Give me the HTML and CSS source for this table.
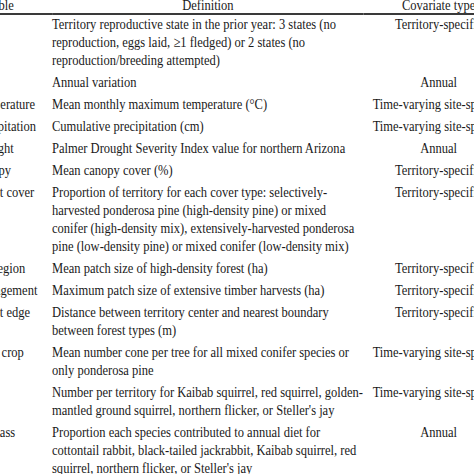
FILE: index.html
```html
<!DOCTYPE html>
<html lang="en">
<head>
<meta charset="utf-8">
<title>Covariates</title>
<link rel="stylesheet" href="styles.css">
</head>
<body>
<div class="table">
  <div class="cell head var">Variable</div>
  <div class="cell head def">Definition</div>
  <div class="cell head type">Covariate type</div>

  <div class="cell var">State</div>
  <div class="cell def">Territory reproductive state in the prior year: 3 states (no<br>reproduction, eggs laid, &ge;1 fledged) or 2 states (no<br>reproduction/breeding attempted)</div>
  <div class="cell type">Territory-specific</div>

  <div class="cell var">Year</div>
  <div class="cell def">Annual variation</div>
  <div class="cell type">Annual</div>

  <div class="cell var">Temperature</div>
  <div class="cell def">Mean monthly maximum temperature (&deg;C)</div>
  <div class="cell type">Time-varying site-specific</div>

  <div class="cell var">Precipitation</div>
  <div class="cell def">Cumulative precipitation (cm)</div>
  <div class="cell type">Time-varying site-specific</div>

  <div class="cell var">Drought</div>
  <div class="cell def">Palmer Drought Severity Index value for northern Arizona</div>
  <div class="cell type">Annual</div>

  <div class="cell var">Canopy</div>
  <div class="cell def">Mean canopy cover (%)</div>
  <div class="cell type">Territory-specific</div>

  <div class="cell var">Forest cover</div>
  <div class="cell def">Proportion of territory for each cover type: selectively-<br>harvested ponderosa pine (high-density pine) or mixed<br>conifer (high-density mix), extensively-harvested ponderosa<br>pine (low-density pine) or mixed conifer (low-density mix)</div>
  <div class="cell type">Territory-specific</div>

  <div class="cell var">HD region</div>
  <div class="cell def">Mean patch size of high-density forest (ha)</div>
  <div class="cell type">Territory-specific</div>

  <div class="cell var">Management</div>
  <div class="cell def">Maximum patch size of extensive timber harvests (ha)</div>
  <div class="cell type">Territory-specific</div>

  <div class="cell var">Forest edge</div>
  <div class="cell def">Distance between territory center and nearest boundary<br>between forest types (m)</div>
  <div class="cell type">Territory-specific</div>

  <div class="cell var">Cone crop</div>
  <div class="cell def">Mean number cone per tree for all mixed conifer species or<br>only ponderosa pine</div>
  <div class="cell type">Time-varying site-specific</div>

  <div class="cell var">Prey</div>
  <div class="cell def">Number per territory for Kaibab squirrel, red squirrel, golden-<br>mantled ground squirrel, northern flicker, or Steller's jay</div>
  <div class="cell type">Time-varying site-specific</div>

  <div class="cell var">Biomass</div>
  <div class="cell def">Proportion each species contributed to annual diet for<br>cottontail rabbit, black-tailed jackrabbit, Kaibab squirrel, red<br>squirrel, northern flicker, or Steller's jay</div>
  <div class="cell type">Annual</div>
</div>
</body>
</html>
```
FILE: styles.css
```css
html, body {
  margin: 0;
  padding: 0;
  background: #ffffff;
  overflow: hidden;
  width: 474px;
  height: 474px;
}

.table {
  display: grid;
  grid-template-columns: 95.8px 373.4px 179.4px;
  width: 648.6px;
  margin-left: -28px;
  margin-top: -3px;
  transform: scaleX(0.835);
  transform-origin: 0 0;
  font-family: "Liberation Serif", "Times New Roman", serif;
  font-size: 15px;
  line-height: 18px;
  color: #1a1a1a;
}

.cell {
  white-space: nowrap;
  padding-bottom: 4px;
}

.head {
  line-height: 16px;
  padding-bottom: 0;
  border-bottom: 2px solid #3a3a3a;
}

.var {
  text-align: left;
}

.def {
  text-align: left;
}

.head.def {
  text-align: center;
}

.type {
  text-align: center;
}
```
